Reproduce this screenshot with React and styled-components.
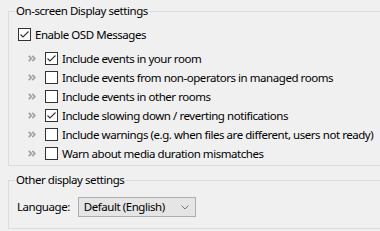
import React from "react";
import styled, { createGlobalStyle } from "styled-components";

const Global = createGlobalStyle`
  html, body { margin: 0; padding: 0; background: #f0f0f0; overflow: hidden; }
  body {
    font-family: "Noto Sans", "Open Sans", sans-serif;
    font-size: 11.5px;
    letter-spacing: -0.45px;
    color: #000;
  }
`;

const Page = styled.div`
  width: 420px;
  padding: 3px 0 0 8px;
  display: flex;
  flex-direction: column;
  gap: 6px;
`;

const Group = styled.fieldset`
  margin: 0;
  border: 1px solid #dcdcdc;
  padding: ${(p) => p.$pad};
  min-width: 0;
`;

const Legend = styled.legend`
  padding: 0 1px;
  margin-left: 6px;
  line-height: 16px;
  height: 16px;
`;

const Rows = styled.div`
  display: flex;
  flex-direction: column;
`;

const Row = styled.label`
  display: flex;
  align-items: center;
  height: 19px;
  padding-left: ${(p) => (p.$sub ? "19px" : "9px")};
  margin-bottom: ${(p) => (p.$gap ? "5px" : "0")};
  white-space: nowrap;
`;

const Chevron = styled.svg`
  width: 8px;
  height: 7px;
  margin-right: 9px;
  flex: none;
`;

const Box = styled.svg`
  width: 13px;
  height: 13px;
  flex: none;
  margin-right: 4px;
`;

const Text = styled.span`
  line-height: 16px;
`;

const LangRow = styled.div`
  display: flex;
  align-items: center;
  padding-left: 8px;
  gap: 8px;
`;

const Select = styled.div`
  box-sizing: border-box;
  width: 118px;
  height: 20px;
  border: 1px solid #adadad;
  background: #e5e5e5;
  display: flex;
  align-items: center;
  justify-content: space-between;
  padding: 0 6px 0 5px;
`;

const Caret = styled.svg`
  width: 8px;
  height: 5px;
`;

function ChevronIcon() {
  return (
    <Chevron viewBox="0 0 8 7">
      <polyline points="0.8,0.8 3.3,3.5 0.8,6.2" fill="none" stroke="#a0a0a0" strokeWidth="1.7" />
      <polyline points="4.3,0.8 6.8,3.5 4.3,6.2" fill="none" stroke="#a0a0a0" strokeWidth="1.7" />
    </Chevron>
  );
}

function CheckBox({ checked }) {
  return (
    <Box viewBox="0 0 13 13">
      <rect x="0.5" y="0.5" width="12" height="12" fill="#fff" stroke="#333" />
      {checked && (
        <polyline points="2.5,6.5 5,9 10.5,3.5" fill="none" stroke="#333" strokeWidth="1.1" />
      )}
    </Box>
  );
}

const items = [
  { t: "Include events in your room", c: true },
  { t: "Include events from non-operators in managed rooms", c: false },
  { t: "Include events in other rooms", c: false },
  { t: "Include slowing down / reverting notifications", c: true },
  { t: "Include warnings (e.g. when files are different, users not ready)", c: false },
  { t: "Warn about media duration mismatches", c: false },
];

export default function App() {
  return (
    <>
      <Global />
      <Page>
        <Group $pad="6px 0 2px 0">
          <Legend>On-screen Display settings</Legend>
          <Rows>
            <Row $gap>
              <CheckBox checked />
              <Text>Enable OSD Messages</Text>
            </Row>
            {items.map((it) => (
              <Row $sub key={it.t}>
                <ChevronIcon />
                <CheckBox checked={it.c} />
                <Text>{it.t}</Text>
              </Row>
            ))}
          </Rows>
        </Group>
        <Group $pad="9px 0 11px 0">
          <Legend>Other display settings</Legend>
          <LangRow>
            <Text>Language:</Text>
            <Select>
              <Text>Default (English)</Text>
              <Caret viewBox="0 0 8 5">
                <polyline points="0.5,0.5 4,4 7.5,0.5" fill="none" stroke="#777" strokeWidth="1" />
              </Caret>
            </Select>
          </LangRow>
        </Group>
      </Page>
    </>
  );
}
